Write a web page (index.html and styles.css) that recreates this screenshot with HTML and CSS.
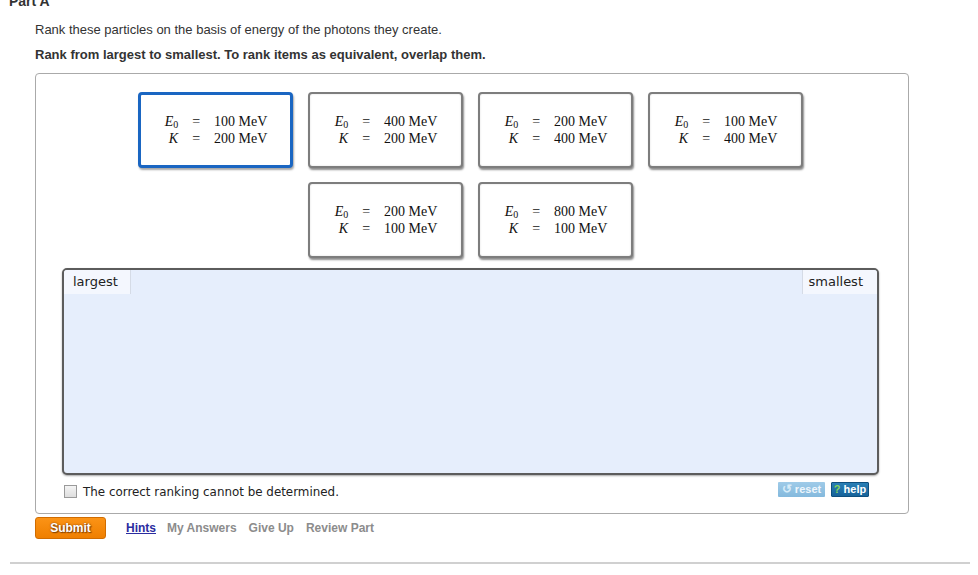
FILE: index.html
```html
<!DOCTYPE html>
<html>
<head>
<meta charset="utf-8">
<link rel="stylesheet" href="styles.css">
</head>
<body>
<div class="page">
  <h2 class="part-title">Part A</h2>
  <div class="content">
    <p class="prompt">Rank these particles on the basis of energy of the photons they create.</p>
    <p class="instr">Rank from largest to smallest. To rank items as equivalent, overlap them.</p>
    <div class="panel">
      <div class="cards">
        <div class="card-row">
          <div class="card selected"><table class="math"><tr><td class="lhs"><i>E</i><sub>0</sub></td><td class="eq">=</td><td class="rhs">100 MeV</td></tr><tr><td class="lhs"><i>K</i></td><td class="eq">=</td><td class="rhs">200 MeV</td></tr></table></div>
          <div class="card"><table class="math"><tr><td class="lhs"><i>E</i><sub>0</sub></td><td class="eq">=</td><td class="rhs">400 MeV</td></tr><tr><td class="lhs"><i>K</i></td><td class="eq">=</td><td class="rhs">200 MeV</td></tr></table></div>
          <div class="card"><table class="math"><tr><td class="lhs"><i>E</i><sub>0</sub></td><td class="eq">=</td><td class="rhs">200 MeV</td></tr><tr><td class="lhs"><i>K</i></td><td class="eq">=</td><td class="rhs">400 MeV</td></tr></table></div>
          <div class="card"><table class="math"><tr><td class="lhs"><i>E</i><sub>0</sub></td><td class="eq">=</td><td class="rhs">100 MeV</td></tr><tr><td class="lhs"><i>K</i></td><td class="eq">=</td><td class="rhs">400 MeV</td></tr></table></div>
        </div>
        <div class="card-row">
          <div class="card"><table class="math"><tr><td class="lhs"><i>E</i><sub>0</sub></td><td class="eq">=</td><td class="rhs">200 MeV</td></tr><tr><td class="lhs"><i>K</i></td><td class="eq">=</td><td class="rhs">100 MeV</td></tr></table></div>
          <div class="card"><table class="math"><tr><td class="lhs"><i>E</i><sub>0</sub></td><td class="eq">=</td><td class="rhs">800 MeV</td></tr><tr><td class="lhs"><i>K</i></td><td class="eq">=</td><td class="rhs">100 MeV</td></tr></table></div>
        </div>
      </div>
      <div class="rank-box">
        <div class="rank-labels">
          <span class="label label-left">largest</span>
          <span class="label label-right">smallest</span>
        </div>
      </div>
      <div class="panel-foot">
        <label class="check"><span class="box"></span><span>The correct ranking cannot be determined.</span></label>
        <div class="tools">
          <span class="btn-reset"><span class="reset-ico">&#8634;</span> reset</span>
          <span class="btn-help"><span class="help-ico">?</span> help</span>
        </div>
      </div>
    </div>
    <div class="actions">
      <span class="submit">Submit</span>
      <a class="link active">Hints</a>
      <a class="link">My Answers</a>
      <a class="link">Give Up</a>
      <a class="link">Review Part</a>
    </div>
  </div>
  <div class="rule"></div>
</div>
</body>
</html>
```
FILE: styles.css
```css
html, body { margin: 0; padding: 0; background: #fff; }
body { font-family: "Liberation Sans", Arial, sans-serif; color: #333; overflow: hidden; }
.page { width: 978px; height: 575px; overflow: hidden; }
.part-title { margin: -7px 0 0 9px; font-size: 14px; line-height: 16px; font-weight: bold; color: #333; }
.content { padding-left: 35px; }
.prompt { margin: 13px 0 0; font-size: 13px; line-height: 16px; color: #333; }
.instr { margin: 9px 0 0; font-size: 13px; line-height: 16px; font-weight: bold; color: #333; }
.panel { margin-top: 10px; width: 872px; border: 1px solid #aaa; border-radius: 4px; padding: 18px 0 15px; }
.cards { display: flex; flex-direction: column; gap: 14px; padding-right: 3px; }
.card-row { display: flex; justify-content: center; gap: 15px; }
.card { box-sizing: border-box; width: 155px; height: 76px; border: 2px solid #7d7d7d; border-radius: 4px; background: #fff; box-shadow: 1px 2px 2px rgba(0,0,0,0.45), inset 0 0 2px rgba(0,0,0,0.15); display: flex; align-items: center; justify-content: center; }
.card.selected { border: 3px solid #1a66c2; box-shadow: 1px 2px 2px rgba(0,0,0,0.35); }
.math { border-collapse: collapse; font-family: "Liberation Serif", "Times New Roman", serif; font-size: 14px; color: #111; margin-left: 1px; }
.math td { padding: 0; line-height: 17px; }
.math .lhs { text-align: right; padding-right: 14px; }
.math .eq { padding-right: 14px; }
.math .rhs { text-align: left; }
.math sub { font-size: 10px; vertical-align: -2px; line-height: 0; }
.rank-box { box-sizing: border-box; margin: 10px 0 0 26px; width: 817px; height: 207px; border: 2px solid #5c5c5c; border-radius: 5px; background: #e6eefc; box-shadow: 0 1px 2px rgba(0,0,0,0.35); }
.rank-labels { display: flex; justify-content: space-between; }
.label { font-family: "DejaVu Sans", Verdana, sans-serif; font-size: 13px; line-height: 24px; color: #222; background: #f4f7fe; }
.label-left { padding: 0 12px 0 9px; border-right: 1px solid #d5dbe6; border-radius: 3px 0 0 0; }
.label-right { padding: 0 14px 0 6px; border-left: 1px solid #d5dbe6; border-radius: 0 3px 0 0; }
.panel-foot { display: flex; justify-content: space-between; align-items: center; margin: 7px 39px 0 28px; height: 16px; }
.check { display: flex; align-items: center; gap: 6px; font-family: "DejaVu Sans", Verdana, sans-serif; font-size: 11.9px; color: #222; margin-top: 3px; }
.box { box-sizing: border-box; width: 13px; height: 13px; border: 1px solid #9a9a9a; background: linear-gradient(#f4f4f4, #dedede); }
.tools { display: flex; gap: 6px; margin-top: -2px; }
.btn-reset, .btn-help { font-family: "Liberation Sans", Arial, sans-serif; font-size: 11px; font-weight: bold; color: #fff; line-height: 15px; height: 15px; border-radius: 1px; }
.btn-reset { width: 47px; text-align: center; background: linear-gradient(#9fcbe8, #84b9dd); color: #eef6fc; }
.reset-ico { color: #d7ecf9; font-size: 12px; }
.btn-help { width: 38px; text-align: center; background: linear-gradient(#2a7fb5, #16639a); border: 1px solid #0e4f7e; box-sizing: border-box; line-height: 13px; }
.help-ico { color: #86d65a; }
.actions { display: flex; align-items: center; margin-top: 3px; height: 22px; }
.submit { box-sizing: border-box; width: 71px; height: 22px; line-height: 20px; text-align: center; background: linear-gradient(#fb9316, #ef7f00); border: 1px solid #d06c00; border-radius: 3px; color: #fff; font-size: 12px; font-weight: bold; text-shadow: 0 0 2px #7a3a00, 1px 1px 1px #8a4500; margin-right: 20px; }
.link { font-size: 12px; font-weight: bold; color: #8c8c8c; margin-right: 12px; text-decoration: none; }
.link.active { color: #2b2ca0; text-decoration: underline; margin-right: 11px; }
.rule { margin: 23px 0 0 10px; width: 960px; height: 2px; background: #d0d0d0; }
```
